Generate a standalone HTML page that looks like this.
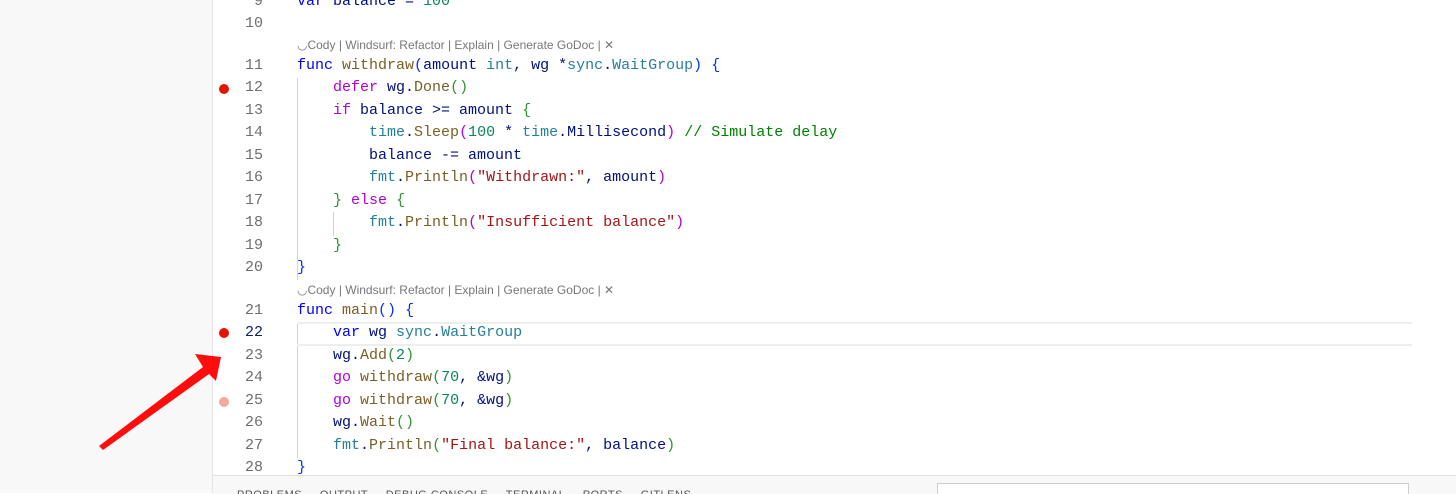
<!DOCTYPE html>
<html><head><style>
body{margin:0;width:1456px;height:493px;overflow:hidden;background:#fff;position:relative;font-family:"Liberation Mono",monospace;}
#side{position:absolute;left:0;top:0;width:212px;height:493px;background:#f8f8f8;border-right:1px solid #e5e5e5;}
.l{position:absolute;left:297px;font-size:15px;white-space:pre;height:22px;line-height:22px;color:#001080;}
.n{position:absolute;left:220px;width:43px;text-align:right;font-size:15px;line-height:22px;color:#6e6e6e;}
.cl{position:absolute;left:297px;font-family:"Liberation Sans",sans-serif;font-size:12px;color:#777;line-height:16px;}
.k{color:#0000ff}.c{color:#af00db}.f{color:#795e26}.t{color:#267f99}.s{color:#a31515}.g{color:#098658}.cm{color:#008000}.p{color:#0431fa}.pg{color:#319331}
.dot{position:absolute;left:219px;width:10px;height:10px;border-radius:50%;background:#e51400;}
.guide{position:absolute;width:1px;background:#d3d3d3;}
#panel{position:absolute;left:213px;top:475px;width:1243px;height:18px;background:#f8f8f8;border-top:1px solid #e0e0e0;overflow:hidden}
</style></head><body>
<div id="side"></div>
<div class="guide" style="left:297px;top:78px;height:202px"></div>
<div class="guide" style="left:333px;top:212px;height:24px"></div>
<div class="guide" style="left:297px;top:322px;height:136px"></div>
<div style="position:absolute;left:297px;top:322px;width:1115px;height:20px;border-top:2px solid #eeeeee;border-bottom:2px solid #eeeeee;"></div>

<div class="n" style="top:-9px">9</div><div class="l" style="top:-9px"><span class="k">var</span> balance = <span class="g">100</span></div>
<div class="n" style="top:13px">10</div>
<div class="cl" style="top:37px">&#x25E1;Cody | Windsurf: Refactor | Explain | Generate GoDoc | ✕</div>
<div class="n" style="top:55px">11</div><div class="l" style="top:55px"><span class="k">func</span> <span class="f">withdraw</span><span class="p">(</span>amount <span class="t">int</span>, wg *<span class="t">sync</span>.<span class="t">WaitGroup</span><span class="p">)</span> <span class="p">{</span></div>
<div class="dot" style="top:84px"></div>
<div class="n" style="top:77px">12</div><div class="l" style="top:77px">    <span class="c">defer</span> wg.<span class="f">Done</span><span class="pg">()</span></div>
<div class="n" style="top:100px">13</div><div class="l" style="top:100px">    <span class="c">if</span> balance &gt;= amount <span class="pg">{</span></div>
<div class="n" style="top:122px">14</div><div class="l" style="top:122px">        <span class="t">time</span>.<span class="f">Sleep</span><span class="c">(</span><span class="g">100</span> * <span class="t">time</span>.Millisecond<span class="c">)</span> <span class="cm">// Simulate delay</span></div>
<div class="n" style="top:145px">15</div><div class="l" style="top:145px">        balance -= amount</div>
<div class="n" style="top:167px">16</div><div class="l" style="top:167px">        <span class="t">fmt</span>.<span class="f">Println</span><span class="c">(</span><span class="s">"Withdrawn:"</span>, amount<span class="c">)</span></div>
<div class="n" style="top:190px">17</div><div class="l" style="top:190px">    <span class="pg">}</span> <span class="c">else</span> <span class="pg">{</span></div>
<div class="n" style="top:212px">18</div><div class="l" style="top:212px">        <span class="t">fmt</span>.<span class="f">Println</span><span class="c">(</span><span class="s">"Insufficient balance"</span><span class="c">)</span></div>
<div class="n" style="top:235px">19</div><div class="l" style="top:235px">    <span class="pg">}</span></div>
<div class="n" style="top:257px">20</div><div class="l" style="top:257px"><span class="p">}</span></div>
<div class="cl" style="top:282px">&#x25E1;Cody | Windsurf: Refactor | Explain | Generate GoDoc | ✕</div>
<div class="n" style="top:300px">21</div><div class="l" style="top:300px"><span class="k">func</span> <span class="f">main</span><span class="p">()</span> <span class="p">{</span></div>
<div class="dot" style="top:328px"></div>
<div class="n" style="top:322px;color:#0b216f">22</div><div class="l" style="top:322px">    <span class="k">var</span> wg <span class="t">sync</span>.<span class="t">WaitGroup</span></div>
<div class="n" style="top:345px">23</div><div class="l" style="top:345px">    wg.<span class="f">Add</span><span class="pg">(</span><span class="g">2</span><span class="pg">)</span></div>
<div class="n" style="top:367px">24</div><div class="l" style="top:367px">    <span class="c">go</span> <span class="f">withdraw</span><span class="pg">(</span><span class="g">70</span>, &amp;wg<span class="pg">)</span></div>
<div class="dot" style="top:397px;background:#f4a9a0"></div>
<div class="n" style="top:390px">25</div><div class="l" style="top:390px">    <span class="c">go</span> <span class="f">withdraw</span><span class="pg">(</span><span class="g">70</span>, &amp;wg<span class="pg">)</span></div>
<div class="n" style="top:412px">26</div><div class="l" style="top:412px">    wg.<span class="f">Wait</span><span class="pg">()</span></div>
<div class="n" style="top:435px">27</div><div class="l" style="top:435px">    <span class="t">fmt</span>.<span class="f">Println</span><span class="pg">(</span><span class="s">"Final balance:"</span>, balance<span class="pg">)</span></div>
<div class="n" style="top:457px">28</div><div class="l" style="top:457px"><span class="p">}</span></div>

<div id="panel">
<div style="position:absolute;left:24px;top:13px;font-family:'Liberation Sans',sans-serif;font-size:11px;color:#555;white-space:pre;letter-spacing:0.5px">PROBLEMS     OUTPUT     DEBUG CONSOLE     TERMINAL     PORTS     GITLENS</div>
<div style="position:absolute;left:724px;top:7px;width:470px;height:20px;background:#fff;border:1px solid #cecece;"><span style="position:absolute;left:10px;top:8px;font-family:'Liberation Sans',sans-serif;font-size:12px;color:#777">Filter (e.g. text, **/*.ts, !**/node_modules/**)</span></div>
</div>

<svg style="position:absolute;left:0;top:0" width="1456" height="493"><polygon points="99,446 203,367 195,354 221,357 216,381 209,374 103,450" fill="#ff0d0d"/></svg>
</body></html>
